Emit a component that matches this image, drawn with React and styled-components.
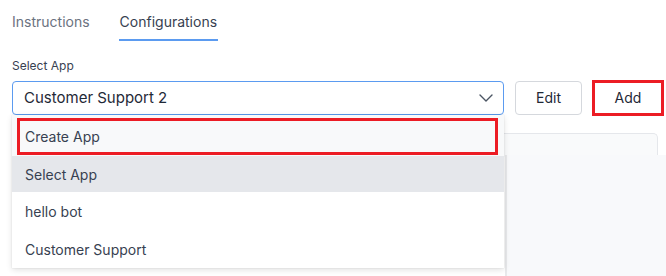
import React from "react";
import styled, { createGlobalStyle } from "styled-components";

const Global = createGlobalStyle`
  html, body { margin: 0; padding: 0; background: #fff; }
  body { font-family: Inter, "Noto Sans", sans-serif; width: 666px; height: 276px; overflow: hidden; }
  * { box-sizing: border-box; }
`;

const Page = styled.div`
  padding: 0 0 0 12px;
  position: relative;
`;

const Tabs = styled.div`
  display: flex;
  gap: 28px;
  height: 41px;
`;

const Tab = styled.div`
  font-size: 14px;
  color: ${(p) => (p.$active ? "#374151" : "#6b7280")};
  padding: 13px 1px 0;
  border-bottom: 2px solid ${(p) => (p.$active ? "#5b9bf0" : "transparent")};
  height: 41px;
  margin-left: ${(p) => (p.$first ? "-1px" : "0")};
`;

const Label = styled.div`
  font-size: 12px;
  color: #374151;
  margin-top: 18px;
  line-height: 14px;
`;

const Row = styled.div`
  display: flex;
  align-items: center;
  margin-top: 7px;
  height: 35px;
`;

const SelectBox = styled.div`
  flex: 0 0 492px;
  height: 34px;
  border: 1px solid #5b9bf0;
  border-radius: 4px;
  display: flex;
  align-items: center;
  justify-content: space-between;
  padding: 0 10px 0 11px;
  font-size: 15px;
  color: #1f2937;
`;

const Button = styled.div`
  flex: 0 0 ${(p) => p.$w}px;
  height: ${(p) => (p.$marked ? "36px" : "34px")};
  margin-left: ${(p) => p.$ml}px;
  border: ${(p) => (p.$marked ? "3px solid #ec1c24" : "1px solid #d5d8dd")};
  border-radius: ${(p) => (p.$marked ? "0" : "4px")};
  display: flex;
  align-items: center;
  justify-content: center;
  font-size: 14px;
  color: #1f2937;
`;

const Content = styled.div`
  position: relative;
  height: 170px;
`;

const PanelHead = styled.div`
  position: absolute;
  left: 480px;
  top: 18px;
  width: 166px;
  height: 24px;
  border: 1px solid #e5e7eb;
  border-bottom: none;
  border-radius: 5px 5px 0 0;
  background: #f9fafb;
`;

const PanelBody = styled.div`
  position: absolute;
  left: 493px;
  top: 40px;
  right: 0;
  bottom: 0;
  background: #f8f9fb;
  border-left: 2px solid #e8e9eb;
`;

const Menu = styled.div`
  position: absolute;
  left: 0;
  top: 0;
  width: 492px;
  background: #fff;
  box-shadow: 0 2px 6px rgba(0, 0, 0, 0.12), 0 0 1px rgba(0, 0, 0, 0.15);
  z-index: 2;
`;

const Item = styled.div`
  height: ${(p) => p.$h || 38}px;
  display: flex;
  align-items: center;
  padding-left: 13px;
  font-size: 14px;
  color: #374151;
  background: ${(p) => p.$bg || "#fff"};
`;

const CreateWrap = styled.div`
  background: #f8f9fa;
  padding: 3px 6px 1px 5px;
  height: 41px;
`;

const Marked = styled.div`
  height: 37px;
  display: flex;
  align-items: center;
  padding-left: 5px;
  border: 3px solid #ec1c24;
  font-size: 14px;
  color: #374151;
`;

const Chevron = () => (
  <svg width="14" height="8" viewBox="0 0 14 8" fill="none">
    <path d="M1 1l6 6 6-6" stroke="#4b5563" strokeWidth="1.4" strokeLinecap="round" strokeLinejoin="round" />
  </svg>
);

export default function App() {
  return (
    <>
      <Global />
      <Page>
        <Tabs>
          <Tab $first>Instructions</Tab>
          <Tab $active>Configurations</Tab>
        </Tabs>
        <Label>Select App</Label>
        <Row>
          <SelectBox>
            <span>Customer Support 2</span>
            <Chevron />
          </SelectBox>
          <Button $w={67} $ml={11}>Edit</Button>
          <Button $w={72} $ml={10} $marked>Add</Button>
        </Row>
        <Content>
          <PanelHead />
          <PanelBody />
          <Menu>
            <CreateWrap>
              <Marked>Create App</Marked>
            </CreateWrap>
            <Item $bg="#e5e7eb" $h={36}>Select App</Item>
            <Item>hello bot</Item>
            <Item>Customer Support</Item>
          </Menu>
        </Content>
      </Page>
    </>
  );
}
